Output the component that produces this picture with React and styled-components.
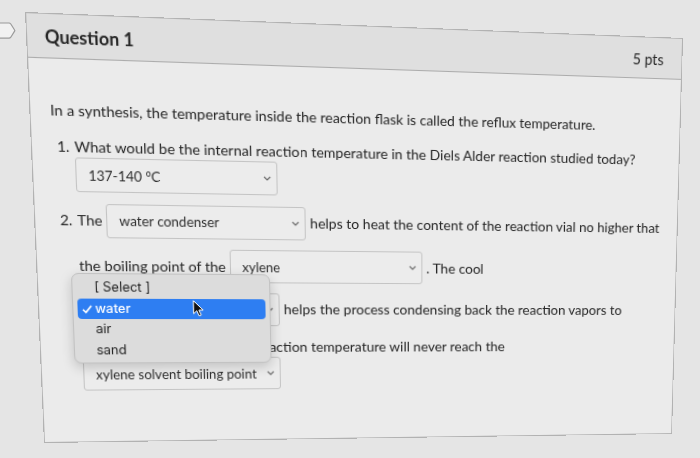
import styled, { createGlobalStyle } from "styled-components";

const GlobalStyle = createGlobalStyle`
  html, body {
    margin: 0;
    padding: 0;
  }
  body {
    background: #e5e5e5;
    font-family: Lato, "Open Sans", sans-serif;
  }
`;

const Page = styled.div`
  width: 700px;
  height: 458px;
  overflow: hidden;
  box-sizing: border-box;
  padding-top: 12px;
  display: flex;
  align-items: flex-start;
  background: #e5e5e5;
`;

const Gutter = styled.div`
  width: 25px;
  flex-shrink: 0;
  padding-top: 10px;
`;

// the screen was photographed at an angle: project the flat card onto that quad
const Card = styled.section`
  width: 645px;
  height: 413px;
  flex-shrink: 0;
  box-sizing: border-box;
  border: 1px solid #b2b2b2;
  background: #ebebeb;
  color: #262626;
  transform-origin: 0 0;
  transform: matrix3d(1.11147, 0.043918, 0, 0.00013877, 0.048274, 1.09507, 0, 0.00011947, 0, 0, 1, 0, 0, 0, 0, 1);
`;

const Header = styled.header`
  height: 41px;
  box-sizing: border-box;
  padding: 2px 19px 0 16px;
  display: flex;
  align-items: center;
  justify-content: space-between;
  background: #dfdfdf;
  border-bottom: 1px solid #acacac;
`;

const Title = styled.h2`
  margin: 0;
  font-size: 16.5px;
  font-weight: 700;
`;

const Points = styled.span`
  font-size: 15px;
`;

const Body = styled.div`
  padding: 38px 0 0 18px;
  font-size: 14px;
  line-height: 20px;
`;

const Prompt = styled.p`
  margin: 0 0 14px;
`;

const List = styled.ol`
  list-style: none;
  margin: 0;
  padding: 0 0 0 5px;
  display: flex;
  flex-direction: column;
  gap: 5px;
`;

const Item = styled.li`
  display: flex;
`;

const Marker = styled.span`
  width: 16px;
  flex-shrink: 0;
  height: ${(p) => p.$h}px;
  display: flex;
  align-items: center;
`;

const Content = styled.div`
  display: flex;
  flex-direction: column;
  align-items: flex-start;
`;

const Row = styled.div`
  height: ${(p) => p.$h}px;
  display: flex;
  align-items: ${(p) => (p.$bottom ? "flex-end" : "center")};
  gap: 4px;
  white-space: nowrap;
`;

const Anchor = styled.div`
  position: relative;
`;

const SelectBox = styled.div`
  width: 192px;
  height: 33px;
  box-sizing: border-box;
  padding: 0 5px 0 11px;
  display: flex;
  align-items: center;
  justify-content: space-between;
  border: 1px solid #c4c4c4;
  border-radius: 3px;
  background: #ececec;
  font-size: 13px;
  color: #2e2e2e;
`;

const Chevron = () => (
  <svg width="8" height="5" viewBox="0 0 8 5">
    <path d="M1 1 L4 4 L7 1" fill="none" stroke="#6a6a6a" strokeWidth="1.2" />
  </svg>
);

const Select = ({ value }) => (
  <SelectBox>
    <span>{value}</span>
    <Chevron />
  </SelectBox>
);

const Menu = styled.div`
  position: absolute;
  left: -8.5px;
  top: -18.5px;
  z-index: 2;
  width: 191px;
  height: 89px;
  box-sizing: border-box;
  padding: 3px 4px;
  background: #dcdcdc;
  border: 1px solid #c2c2c2;
  border-radius: 7px;
  box-shadow: 0 4px 12px rgba(0, 0, 0, 0.18);
  font-family: Inter, "Liberation Sans", sans-serif;
  font-size: 12.5px;
  color: #222;
`;

const Option = styled.div`
  position: relative;
  height: 20.5px;
  padding-left: 17px;
  display: flex;
  align-items: center;
  border-radius: 4px;
  background: ${(p) => (p.$active ? "#2e7ef2" : "transparent")};
  color: ${(p) => (p.$active ? "#fff" : "inherit")};
  font-weight: ${(p) => (p.$active ? 500 : 400)};
`;

const Check = styled.svg`
  position: absolute;
  left: 4px;
  top: 6px;
`;

const Cursor = styled.svg`
  position: absolute;
  left: 114px;
  top: 25px;
`;

const FlagIcon = () => (
  <svg width="16" height="18" viewBox="0 0 16 18">
    <path
      d="M-2 1 H9 Q10 1 10.8 2 L14.6 8 Q15 8.6 14.6 9.2 L10.8 15.2 Q10 16.2 9 16.2 H-2"
      fill="#f1f1f1"
      stroke="#9a9a9a"
      strokeWidth="1.2"
    />
  </svg>
);

export default function App() {
  return (
    <>
      <GlobalStyle />
      <Page>
        <Gutter>
          <FlagIcon />
        </Gutter>
        <Card>
          <Header>
            <Title>Question 1</Title>
            <Points>5 pts</Points>
          </Header>
          <Body>
            <Prompt>
              In a synthesis, the temperature inside the reaction flask is called the reflux temperature.
            </Prompt>
            <List>
              <Item>
                <Marker $h={20}>1.</Marker>
                <Content>
                  <Row $h={20}>
                    What would be the internal reaction temperature in the Diels Alder reaction studied today?
                  </Row>
                  <Select value="137-140 °C" />
                </Content>
              </Item>
              <Item>
                <Marker $h={44}>2.</Marker>
                <Content>
                  <Row $h={44}>
                    <span>The</span>
                    <Select value="water condenser" />
                    <span>helps to heat the content of the reaction vial no higher that</span>
                  </Row>
                  <Row $h={43}>
                    <span>the boiling point of the</span>
                    <Select value="xylene" />
                    <span>. The cool</span>
                  </Row>
                  <Row $h={42}>
                    <Anchor>
                      <Select value="water" />
                      <Menu>
                        <Option>[ Select ]</Option>
                        <Option $active>
                          <Check width="10" height="9" viewBox="0 0 10 9">
                            <path d="M1 4.8 L3.8 7.6 L9 1" fill="none" stroke="#fff" strokeWidth="1.6" />
                          </Check>
                          water
                        </Option>
                        <Option>air</Option>
                        <Option>sand</Option>
                        <Cursor width="11" height="17" viewBox="0 0 11 17">
                          <path
                            d="M0.7 0.7 L0.7 13.6 L3.8 10.7 L6 15.8 L8 14.9 L5.9 10 L10 10 Z"
                            fill="#111"
                            stroke="#fff"
                            strokeWidth="1"
                          />
                        </Cursor>
                      </Menu>
                    </Anchor>
                    <span>helps the process condensing back the reaction vapors to</span>
                  </Row>
                  <Row $h={27} $bottom>
                    liquid form. In this way, the reaction temperature will never reach the
                  </Row>
                  <Row $h={33}>
                    <Select value="xylene solvent boiling point" />
                  </Row>
                </Content>
              </Item>
            </List>
          </Body>
        </Card>
      </Page>
    </>
  );
}
